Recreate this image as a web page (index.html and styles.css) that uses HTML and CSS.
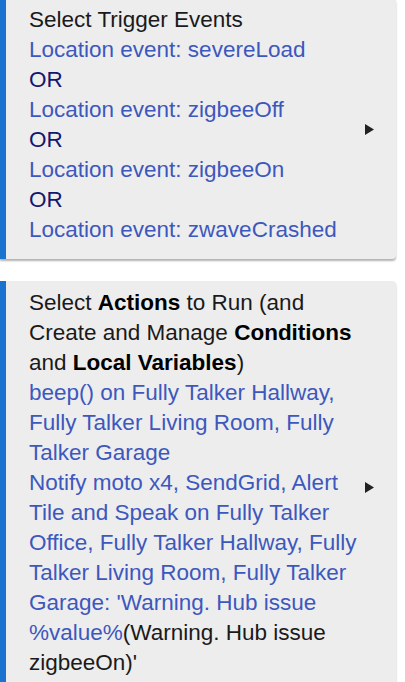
FILE: index.html
```html
<!DOCTYPE html>
<html lang="en">
<head>
    <meta charset="UTF-8">
    <meta name="viewport" content="width=device-width, initial-scale=1.0">
    <title>Rule Machine</title>
    <link rel="stylesheet" href="styles.css">
</head>
<body>
    <div class="rule-list">
        <div class="rule-card">
            <div class="rule-text">
                <div>Select Trigger Events</div>
                <div class="item">Location event: severeLoad</div>
                <div class="or">OR</div>
                <div class="item">Location event: zigbeeOff</div>
                <div class="or">OR</div>
                <div class="item">Location event: zigbeeOn</div>
                <div class="or">OR</div>
                <div class="item">Location event: zwaveCrashed</div>
            </div>
            <div class="rule-arrow">
                <svg width="9" height="11" viewBox="0 0 9 11"><polygon points="0,0 9,5.5 0,11" fill="#222"/></svg>
            </div>
        </div>

        <div class="rule-card rule-card-long">
            <div class="rule-text">
                <div>Select <b>Actions</b> to Run (and Create and Manage <b>Conditions</b> and <b>Local Variables</b>)</div>
                <div class="item">beep() on Fully Talker Hallway, Fully Talker Living Room, Fully Talker Garage</div>
                <div class="item">Notify moto x4, SendGrid, Alert Tile and Speak on Fully Talker Office, Fully Talker Hallway, Fully Talker Living Room, Fully Talker Garage: 'Warning. Hub issue %value%<span class="plain">(Warning. Hub issue zigbeeOn)'</span></div>
            </div>
            <div class="rule-arrow">
                <svg width="9" height="11" viewBox="0 0 9 11"><polygon points="0,0 9,5.5 0,11" fill="#222"/></svg>
            </div>
        </div>
    </div>
</body>
</html>
```

FILE: styles.css
```css
body {
    margin: 0;
    background-color: #ffffff;
    font-family: "Liberation Sans", Arial, sans-serif;
    font-size: 22.5px;
    line-height: 30px;
    color: #1a1a1a;
}
.rule-list {
    margin-top: -2px;
    width: 396px;
    display: flex;
    flex-direction: column;
    gap: 22px;
}
.rule-card {
    display: flex;
    align-items: center;
    background-color: #ededed;
    border-left: 6px solid #1a73cf;
    border-radius: 0 4px 4px 0;
    box-shadow: 0 2px 2px rgba(0, 0, 0, 0.3);
    padding: 7px 0 14px 23px;
}
.rule-card-long {
    padding-bottom: 83px;
}
.rule-text {
    width: 334px;
}
.rule-text b {
    color: #000;
}
.item {
    color: #3d58bd;
}
.or {
    color: #15176f;
}
.plain {
    color: #1a1a1a;
}
.rule-arrow {
    flex: 1;
    display: flex;
    justify-content: center;
    padding: 8px 20px 0 0;
}
.rule-arrow svg {
    display: block;
}
```
